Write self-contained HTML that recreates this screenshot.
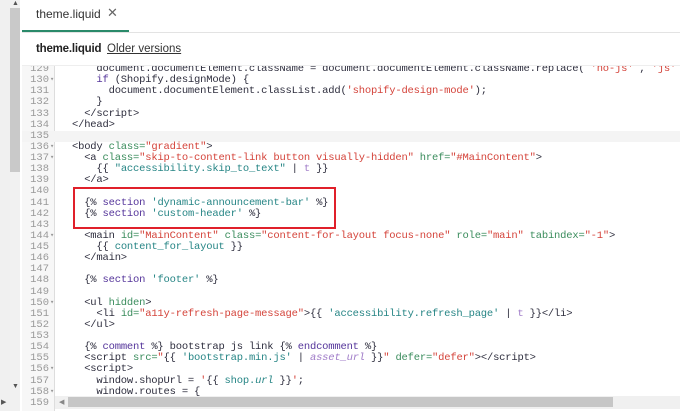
<!DOCTYPE html>
<html><head><meta charset="utf-8"><style>
*{margin:0;padding:0;box-sizing:border-box}
html,body{width:680px;height:411px;overflow:hidden}
body{background:#fff;font-family:"Liberation Sans",sans-serif;position:relative}
.sbl{position:absolute;left:0;top:0;width:10px;height:411px;background:#f0f0f0}
.sbt{position:absolute;left:10px;top:0;width:10px;height:411px;background:#f1f1f1}
.thumb{position:absolute;left:10px;top:8px;width:10px;height:164px;background:#c9c9c9}
.tab{position:absolute;left:36px;top:7px;font-size:12px;color:#333}
.x{position:absolute;left:107px;top:5px;font-size:13px;color:#666}
.gl{position:absolute;left:22px;top:30px;width:107px;height:2px;background:#2a8a6a}
.hl{position:absolute;left:22px;top:32px;width:658px;height:1px;background:#e3e3e3}
.t2{position:absolute;left:36px;top:43px;font-size:11.5px;color:#222;font-weight:bold;letter-spacing:-0.2px}
.ov{position:absolute;left:107px;top:43px;font-size:11.5px;color:#333;text-decoration:underline}
.code{position:absolute;left:22px;top:65px;width:658px;height:346px;overflow:hidden;border-top:1px solid #eee}
.gut{position:absolute;left:0;top:0;width:33px;height:346px;background:#f7f7f7;border-right:1px solid #ddd}
.lines{position:absolute;left:0;top:-2px;width:658px}
.ln{height:11.13px;line-height:11.13px;font-family:"Liberation Mono",monospace;font-size:10.5px;letter-spacing:-0.2px;white-space:pre;position:relative;color:#2e2e3e}
.ln .n{position:absolute;left:-2px;width:29px;text-align:right;color:#999;letter-spacing:0}
.ln .f{position:absolute;left:28px;color:#999;font-size:7px}
.ln .c{position:absolute;left:37.8px}
.act{background:#f4f4f4}
.a{color:#3a8c5c}.s{color:#d4433a}.k{color:#54349a}.q{color:#268585}.p{color:#a07cc8}
.box{position:absolute;left:73px;top:187px;width:263px;height:42px;border:2px solid #e0202a}
.hs{position:absolute;left:55px;top:396px;width:625px;height:13px;background:#f0f0f0}
.hth{position:absolute;left:68px;top:397px;width:545px;height:10px;background:#c6c6c6}
.ar{position:absolute;font-size:7px;color:#555}
</style></head><body>
<div class="sbl"></div><div class="sbt"></div><div class="thumb"></div>
<div class="ar" style="left:12px;top:0">▲</div>
<div class="ar" style="left:12px;top:383px">▼</div>
<div class="ar" style="left:1px;top:398px">▶</div>
<div class="tab">theme.liquid</div><div class="x">✕</div>
<div class="gl"></div><div class="hl"></div>
<div class="t2">theme.liquid</div><div class="ov">Older versions</div>
<div class="code"><div class="gut"></div><div class="lines">
<div class="ln"><span class="n">129</span><span class="c">      document.documentElement.className = document.documentElement.className.replace( <span class="s">'no-js'</span> , <span class="s">'js'</span> );</span></div>
<div class="ln"><span class="n">130</span><span class="f">▾</span><span class="c">      <span class="k">if</span> (Shopify.designMode) {</span></div>
<div class="ln"><span class="n">131</span><span class="c">        document.documentElement.classList.add(<span class="s">'shopify-design-mode'</span>);</span></div>
<div class="ln"><span class="n">132</span><span class="c">      }</span></div>
<div class="ln"><span class="n">133</span><span class="c">    &lt;/script&gt;</span></div>
<div class="ln"><span class="n">134</span><span class="c">  &lt;/head&gt;</span></div>
<div class="ln act"><span class="n">135</span><span class="c"></span></div>
<div class="ln"><span class="n">136</span><span class="f">▾</span><span class="c">  &lt;body <span class="a">class=</span><span class="s">"gradient"</span>&gt;</span></div>
<div class="ln"><span class="n">137</span><span class="f">▾</span><span class="c">    &lt;a <span class="a">class=</span><span class="s">"skip-to-content-link button visually-hidden"</span> <span class="a">href=</span><span class="s">"#MainContent"</span>&gt;</span></div>
<div class="ln"><span class="n">138</span><span class="c">      {{ <span class="q">"accessibility.skip_to_text"</span> | <span class="p">t</span> }}</span></div>
<div class="ln"><span class="n">139</span><span class="c">    &lt;/a&gt;</span></div>
<div class="ln"><span class="n">140</span><span class="c"></span></div>
<div class="ln"><span class="n">141</span><span class="c">    {% <span class="k">section</span> <span class="q">'dynamic-announcement-bar'</span> %}</span></div>
<div class="ln"><span class="n">142</span><span class="c">    {% <span class="k">section</span> <span class="q">'custom-header'</span> %}</span></div>
<div class="ln"><span class="n">143</span><span class="c"></span></div>
<div class="ln"><span class="n">144</span><span class="f">▾</span><span class="c">    &lt;main <span class="a">id=</span><span class="s">"MainContent"</span> <span class="a">class=</span><span class="s">"content-for-layout focus-none"</span> <span class="a">role=</span><span class="s">"main"</span> <span class="a">tabindex=</span><span class="s">"-1"</span>&gt;</span></div>
<div class="ln"><span class="n">145</span><span class="c">      {{ <span class="q">content_for_layout</span> }}</span></div>
<div class="ln"><span class="n">146</span><span class="c">    &lt;/main&gt;</span></div>
<div class="ln"><span class="n">147</span><span class="c"></span></div>
<div class="ln"><span class="n">148</span><span class="c">    {% <span class="k">section</span> <span class="q">'footer'</span> %}</span></div>
<div class="ln"><span class="n">149</span><span class="c"></span></div>
<div class="ln"><span class="n">150</span><span class="f">▾</span><span class="c">    &lt;ul <span class="a">hidden</span>&gt;</span></div>
<div class="ln"><span class="n">151</span><span class="c">      &lt;li <span class="a">id=</span><span class="s">"a11y-refresh-page-message"</span>&gt;{{ <span class="q">'accessibility.refresh_page'</span> | <span class="p">t</span> }}&lt;/li&gt;</span></div>
<div class="ln"><span class="n">152</span><span class="c">    &lt;/ul&gt;</span></div>
<div class="ln"><span class="n">153</span><span class="c"></span></div>
<div class="ln"><span class="n">154</span><span class="c">    {% <span class="k">comment</span> %} bootstrap js link {% <span class="k">endcomment</span> %}</span></div>
<div class="ln"><span class="n">155</span><span class="c">    &lt;script <span class="a">src=</span><span class="s">"</span>{{ <span class="q">'bootstrap.min.js'</span> | <span class="p"><i>asset_url</i></span> }}<span class="s">"</span> <span class="a">defer=</span><span class="s">"defer"</span>&gt;&lt;/script&gt;</span></div>
<div class="ln"><span class="n">156</span><span class="f">▾</span><span class="c">    &lt;script&gt;</span></div>
<div class="ln"><span class="n">157</span><span class="c">      window.shopUrl = <span class="s">'</span>{{ <span class="q">shop.<i>url</i></span> }}<span class="s">'</span>;</span></div>
<div class="ln"><span class="n">158</span><span class="f">▾</span><span class="c">      window.routes = {</span></div>
<div class="ln"><span class="n">159</span><span class="c"></span></div>
</div></div>
<div class="box"></div>
<div class="hs"></div><div class="hth"></div>
<div class="ar" style="left:59px;top:398px;color:#888">◀</div>
</body></html>
